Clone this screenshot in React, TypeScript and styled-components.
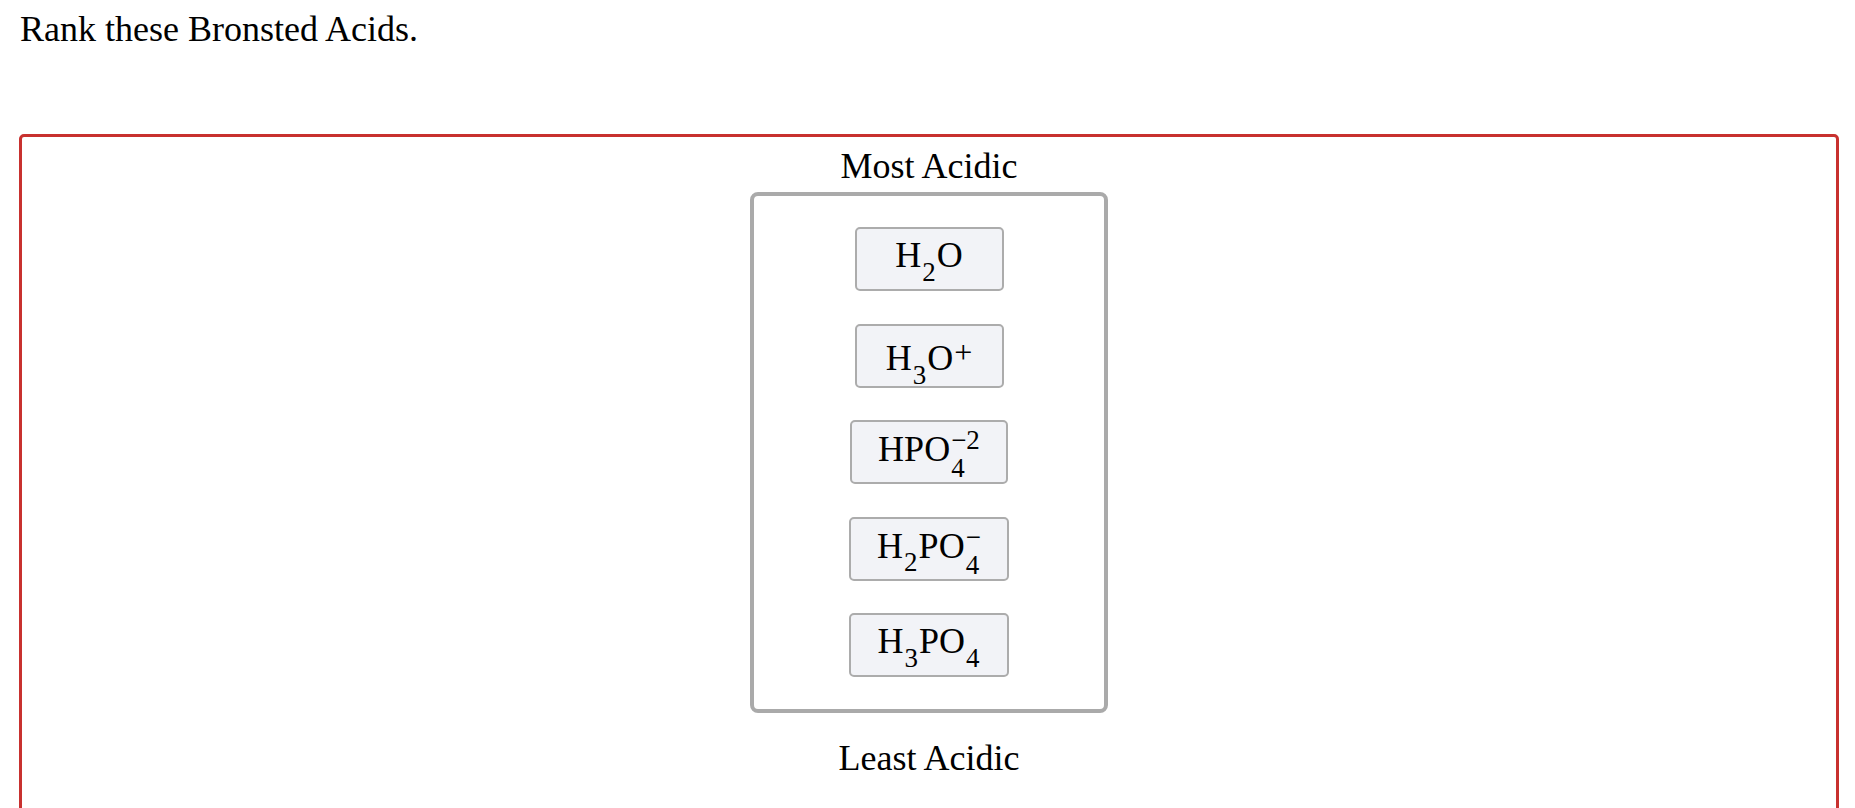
import React from "react";
import styled, { createGlobalStyle } from "styled-components";

const GlobalStyle = createGlobalStyle`
  html, body {
    margin: 0;
    padding: 0;
    background: #ffffff;
  }
  body {
    margin: 8px;
    font-family: "Liberation Serif", "Times New Roman", serif;
    color: #000000;
  }
`;

const Page = styled.div`
  padding: 0 8px 0 11px;
`;

const Title = styled.h1`
  margin: 0;
  padding-left: 1px;
  font-size: 36px;
  font-weight: normal;
  line-height: normal;
`;

const RankBox = styled.div`
  margin-top: 84px;
  border: 3px solid #c8312f;
  border-radius: 5px;
  padding-top: 8px;
  min-height: 700px;
  display: flex;
  flex-direction: column;
  align-items: center;
`;

const EndLabel = styled.div<{ $gapTop?: number }>`
  font-size: 36px;
  line-height: normal;
  margin-top: ${(p) => p.$gapTop ?? 0}px;
`;

const Column = styled.div`
  margin-top: 5px;
  width: 358px;
  box-sizing: border-box;
  border: 4px solid #aaaaaa;
  border-radius: 8px;
  padding: 31px 0 32px;
  display: flex;
  flex-direction: column;
  align-items: center;
  gap: 32.5px;
`;

const Chip = styled.div`
  box-sizing: border-box;
  height: 64px;
  min-width: 149px;
  padding: 4px 26px 0;
  border: 2px solid #acacac;
  border-radius: 5px;
  background: #f2f3f7;
  display: flex;
  justify-content: center;
  align-items: flex-start;
`;

const Formula = styled.span`
  font-size: 36px;
  line-height: 44px;
  white-space: nowrap;
`;

const Sub = styled.span`
  font-size: 27px;
  vertical-align: -14px;
  margin: 0 1px;
`;

const Sup = styled.span<{ $big?: boolean }>`
  font-size: ${(p) => (p.$big ? 32 : 27)}px;
  vertical-align: ${(p) => (p.$big ? 7 : 9)}px;
  margin-left: 1px;
`;

const Stack = styled.span`
  display: inline-block;
  font-size: 27px;
  vertical-align: -16.5px;
  margin-left: 1px;
`;

const StackLine = styled.span`
  display: block;
  line-height: 28px;
  text-align: left;
`;

type Part = { t: string; sub?: string; sup?: string };

const Chem: React.FC<{ parts: Part[] }> = ({ parts }) => (
  <Formula>
    {parts.map((p, i) => (
      <React.Fragment key={i}>
        {p.t}
        {p.sub && p.sup ? (
          <Stack>
            <StackLine>{p.sup}</StackLine>
            <StackLine>{p.sub}</StackLine>
          </Stack>
        ) : p.sub ? (
          <Sub>{p.sub}</Sub>
        ) : p.sup ? (
          <Sup $big={p.sup === "+"}>{p.sup}</Sup>
        ) : null}
      </React.Fragment>
    ))}
  </Formula>
);

const items: Part[][] = [
  [{ t: "H", sub: "2" }, { t: "O" }],
  [{ t: "H", sub: "3" }, { t: "O", sup: "+" }],
  [{ t: "HPO", sub: "4", sup: "\u22122" }],
  [{ t: "H", sub: "2" }, { t: "PO", sub: "4", sup: "\u2212" }],
  [{ t: "H", sub: "3" }, { t: "PO", sub: "4" }],
];

export default function App() {
  return (
    <>
      <GlobalStyle />
      <Page>
        <Title>Rank these Bronsted Acids.</Title>
        <RankBox>
          <EndLabel>Most Acidic</EndLabel>
          <Column>
            {items.map((parts, i) => (
              <Chip key={i}>
                <Chem parts={parts} />
              </Chip>
            ))}
          </Column>
          <EndLabel $gapTop={24}>Least Acidic</EndLabel>
        </RankBox>
      </Page>
    </>
  );
}
